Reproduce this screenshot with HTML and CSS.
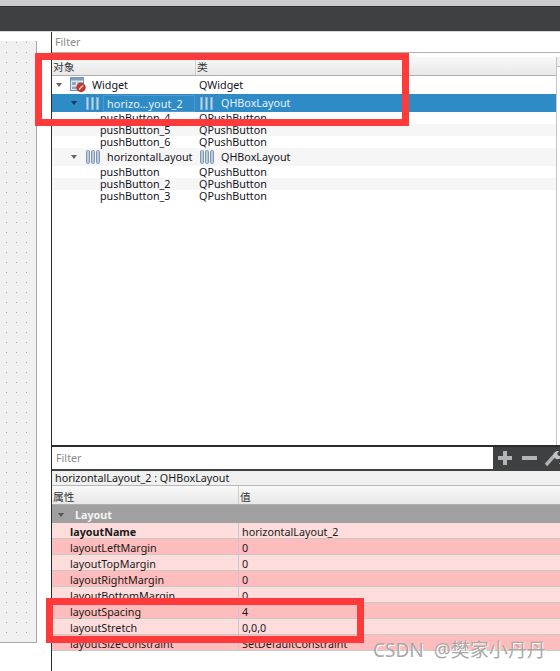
FILE: index.html
```html
<!DOCTYPE html>
<html lang="en">
<head>
  <meta charset="UTF-8">
  <title>Qt Designer</title>
  <link rel="stylesheet" href="styles.css">
</head>
<body>
  <svg width="0" height="0" class="defs">
    <symbol id="hbox" viewBox="0 0 14 14">
      <rect x="0.5" y="0.5" width="3" height="13" rx="1.2" fill="#b9cbe0" stroke="#7f97b5"/>
      <rect x="5.5" y="0.5" width="3" height="13" rx="1.2" fill="#b9cbe0" stroke="#7f97b5"/>
      <rect x="10.5" y="0.5" width="3" height="13" rx="1.2" fill="#b9cbe0" stroke="#7f97b5"/>
    </symbol>
    <symbol id="hbox-sel" viewBox="0 0 13 13">
      <rect x="0.5" y="0.5" width="2" height="12" fill="#bcd6e8" stroke="#7fb2d6"/>
      <rect x="5.5" y="0.5" width="2" height="12" fill="#bcd6e8" stroke="#7fb2d6"/>
      <rect x="10.500" y="0.5" width="2" height="12" fill="#bcd6e8" stroke="#7fb2d6"/>
    </symbol>
  </svg>

  <div class="topbar"></div>
  <div class="toolbar"></div>

  <div class="main">
    <div class="form-area">
      <div class="form-canvas"></div>
    </div>

    <div class="docks">
      <!-- Object inspector -->
      <div class="inspector">
        <div class="filter-top"><span class="filter-text">Filter</span></div>
        <div class="header-row tree-head tree-cols">
          <span class="head-cell">对象</span>
          <span class="head-cell">类</span>
        </div>
        <div class="tree">
          <div class="node node-tall tree-cols">
            <span class="name-cell">
              <span class="arrow arrow-root"></span>
              <svg class="form-icon" width="18" height="18" viewBox="0 0 18 18">
                <rect x="0.5" y="1.5" width="13" height="13" fill="#dfe6ee" stroke="#7890ab"/>
                <rect x="0.5" y="1.5" width="13" height="3" fill="#7f9dbd"/>
                <rect x="2" y="6" width="4" height="3" fill="#8fa9c4"/>
                <rect x="7.5" y="6" width="5" height="3" fill="#8fa9c4"/>
                <rect x="2" y="10.5" width="10" height="2.5" fill="#8fa9c4"/>
                <circle cx="11" cy="11.5" r="4.7" fill="#c0392f"/>
                <path d="M9 13.500l4-4" stroke="#f3d5d0" stroke-width="1.4"/>
              </svg>
              <span class="label-widget">Widget</span>
            </span>
            <span class="class-cell">QWidget</span>
          </div>

          <div class="node node-tall selected tree-cols">
            <span class="name-cell">
              <span class="arrow arrow-child arrow-sel"></span>
              <svg class="box-icon" width="13" height="13"><use href="#hbox-sel"/></svg>
              <span class="name-edit">horizo…yout_2</span>
            </span>
            <span class="class-cell class-icon">
              <svg class="box-icon" width="13" height="13"><use href="#hbox-sel"/></svg>
              QHBoxLayout
            </span>
          </div>

          <div class="node tree-cols">
            <span class="name-cell leaf">pushButton_4</span>
            <span class="class-cell">QPushButton</span>
          </div>
          <div class="node alt tree-cols">
            <span class="name-cell leaf">pushButton_5</span>
            <span class="class-cell">QPushButton</span>
          </div>
          <div class="node tree-cols">
            <span class="name-cell leaf">pushButton_6</span>
            <span class="class-cell">QPushButton</span>
          </div>

          <div class="node node-tall alt tree-cols">
            <span class="name-cell">
              <span class="arrow arrow-child"></span>
              <svg class="box-icon" width="14" height="14"><use href="#hbox"/></svg>
              <span class="label-layout">horizontalLayout</span>
            </span>
            <span class="class-cell class-icon">
              <svg class="box-icon wide" width="14" height="14"><use href="#hbox"/></svg>
              QHBoxLayout
            </span>
          </div>

          <div class="node tree-cols">
            <span class="name-cell leaf">pushButton</span>
            <span class="class-cell">QPushButton</span>
          </div>
          <div class="node alt tree-cols">
            <span class="name-cell leaf">pushButton_2</span>
            <span class="class-cell">QPushButton</span>
          </div>
          <div class="node tree-cols">
            <span class="name-cell leaf">pushButton_3</span>
            <span class="class-cell">QPushButton</span>
          </div>
        </div>
        <div class="scroll-line"><span class="scroll-arrow"></span></div>
      </div>

      <!-- Property editor -->
      <div class="props">
        <div class="filter-bar">
          <div class="filter-box">Filter</div>
          <div class="filter-tools">
            <svg width="18" height="18" viewBox="0 0 18 18"><path d="M9 2v14M2 9h14" stroke="#b4b4b4" stroke-width="4"/></svg>
            <svg width="18" height="18" viewBox="0 0 18 18"><path d="M2 9h15" stroke="#b4b4b4" stroke-width="4"/></svg>
            <svg width="20" height="18" viewBox="0 0 20 18"><path d="M2 16L10 7" stroke="#b0b0b0" stroke-width="3.4"/><path d="M9 7c0-3 2.500-5 6-5l-2 3 2 2 3-1c0 3-3 5-6 4z" fill="#c4c4c4"/><path d="M15 14h5l-2.500 3z" fill="#c4c4c4"/></svg>
          </div>
        </div>
        <div class="object-label">horizontalLayout_2 : QHBoxLayout</div>
        <div class="header-row prop-head prop-cols">
          <span class="head-cell">属性</span>
          <span class="head-cell">值</span>
        </div>
        <div class="group-row"><span class="arrow arrow-group"></span>Layout</div>
        <div class="prop light prop-cols"><span class="prop-name strong">layoutName</span><span class="prop-value">horizontalLayout_2</span></div>
        <div class="prop dark prop-cols"><span class="prop-name">layoutLeftMargin</span><span class="prop-value">0</span></div>
        <div class="prop light prop-cols"><span class="prop-name">layoutTopMargin</span><span class="prop-value">0</span></div>
        <div class="prop dark prop-cols"><span class="prop-name">layoutRightMargin</span><span class="prop-value">0</span></div>
        <div class="prop light prop-cols"><span class="prop-name">layoutBottomMargin</span><span class="prop-value">0</span></div>
        <div class="prop dark prop-cols"><span class="prop-name">layoutSpacing</span><span class="prop-value">4</span></div>
        <div class="prop light prop-cols"><span class="prop-name">layoutStretch</span><span class="prop-value">0,0,0</span></div>
        <div class="prop dark prop-cols"><span class="prop-name">layoutSizeConstraint</span><span class="prop-value">SetDefaultConstraint</span></div>
      </div>
    </div>
  </div>

  <!-- annotations drawn over the screenshot -->
  <div class="mark mark-top"></div>
  <div class="mark mark-bottom"></div>
  <div class="watermark">CSDN @樊家小丹丹</div>
</body>
</html>
```

FILE: styles.css
```css
* {
  box-sizing: border-box;
}

html, body {
  margin: 0;
  padding: 0;
  overflow: hidden;
  height: 100%;
  width: 100%;
}

body {
  position: relative;
  font-family: "Noto Sans", "Noto Sans CJK SC", sans-serif;
  font-size: 10.75px;
  color: #1a1a1a;
  background-color: #fff;
}

.defs {
  position: absolute;
}

.topbar {
  height: 6px;
  background-color: #cbcbcb;
}

.toolbar {
  height: 25px;
  background-color: #3f4042;
  border-top: 1px solid #2e2e30;
}

.main {
  display: flex;
  height: 640px;
  border-top: 1px solid #d8d8d8;
}

.form-area {
  width: 51px;
  flex: none;
  padding-top: 9px;
}

.form-canvas {
  width: 37px;
  height: 602px;
  background-color: #f0f0f0;
  background-image: radial-gradient(circle at 6.5px 1.5px, #a8a8a8 0.7px, transparent 1px);
  background-size: 10px 10px;
  border-right: 1px solid #a6a6a6;
  border-bottom: 1px solid #a6a6a6;
}

.docks {
  flex: 1;
  min-width: 0;
  display: flex;
  flex-direction: column;
  border-left: 1px solid #2c2c2c;
}

/* Object inspector */
.inspector {
  position: relative;
  height: 413px;
}

.filter-top {
  height: 21px;
  padding-left: 3px;
  display: flex;
  align-items: center;
  border-bottom: 1px solid #b0b0b0;
  color: #8a8a8a;
}

.header-row {
  height: 19px;
  background: linear-gradient(#f9f9f9, #e8e8e8);
  border-bottom: 1px solid #b0b0b0;
  color: #333;
}

.tree-head {
  margin-top: 4px;
}

.prop-head .head-cell {
  padding-top: 2px;
}

.head-cell {
  display: flex;
  align-items: center;
  padding-left: 1px;
  border-right: 1px solid #d0d0d0;
  font-family: "Noto Sans CJK SC", sans-serif;
}

.head-cell:last-child {
  border-right: none;
}

.tree-cols {
  display: grid;
  grid-template-columns: 144px 1fr;
  margin-right: 4px;
}

.node {
  height: 12px;
  line-height: 12px;
  background-color: #fff;
  color: #14141c;
}

.node-tall {
  height: 18px;
  line-height: 18px;
}

.alt {
  background-color: #f6f6f6;
}

.selected {
  background-color: #2e8bc6;
  color: #e8f2f8;
}

.name-cell {
  display: flex;
  align-items: center;
  white-space: nowrap;
}

.leaf {
  padding-left: 48px;
}

.class-cell {
  display: flex;
  align-items: center;
  padding-left: 3px;
  white-space: nowrap;
}

.class-icon .box-icon {
  margin: 0 8px 0 1px;
  flex: none;
}

.class-icon .wide {
  margin-right: 7px;
}

.arrow {
  display: inline-block;
  width: 0;
  height: 0;
  flex: none;
  border-left: 3px solid transparent;
  border-right: 3px solid transparent;
  border-top: 4px solid #666;
}

.arrow-root {
  margin-left: 4px;
}

.arrow-child {
  margin-left: 19px;
}

.arrow-sel {
  border-top-color: #123a55;
}

.arrow-group {
  margin: 0 11px 0 6px;
  border-top-color: #555;
}

.form-icon {
  margin-left: 8px;
  flex: none;
}

.label-widget {
  margin-left: 4px;
}

.arrow-child + .box-icon {
  margin-left: 9px;
  flex: none;
}

.label-layout {
  margin-left: 7px;
}

.name-edit {
  margin-left: 4px;
  padding: 0 0 0 3px;
  width: 92px;
  height: 17px;
  line-height: 16px;
  letter-spacing: 0.15px;
  border: 1px solid #4c9ad0;
  flex: none;
}

.scroll-line {
  position: absolute;
  right: 0;
  top: 25px;
  bottom: 0;
  width: 4px;
  border-left: 1px solid #c4c4c4;
}

.scroll-arrow {
  display: block;
  height: 10px;
  border-bottom: 1px solid #c4c4c4;
  background-color: #f0f0f0;
}

/* Property editor */
.props {
  flex: 1;
  border-top: 2px solid #2c2c2c;
}

.filter-bar {
  display: flex;
  height: 24px;
  border-bottom: 2px solid #3f4042;
}

.filter-box {
  flex: 1;
  padding-left: 4px;
  line-height: 23px;
  color: #8a8a8a;
  background-color: #fff;
}

.filter-tools {
  width: 67px;
  display: flex;
  align-items: center;
  gap: 6px;
  padding-left: 3px;
  background-color: #3f4042;
  flex: none;
}

.filter-tools svg {
  flex: none;
}

.object-label {
  height: 15px;
  line-height: 14px;
  padding-left: 3px;
  background-color: #f0f0f0;
  border-bottom: 1px solid #b8b8b8;
}

.prop-cols {
  display: grid;
  grid-template-columns: 187px 1fr;
}

.group-row {
  height: 18px;
  padding-top: 2px;
  display: flex;
  align-items: center;
  background-color: #a0a0a0;
  color: #f4f4f4;
  font-weight: bold;
}

.prop {
  height: 16px;
  line-height: 18px;
  border-bottom: 1px solid #c8c8c8;
}

.light {
  background-color: #fddcdc;
}

.dark {
  background-color: #febcbc;
}

.prop-name {
  padding-left: 18px;
  border-right: 1px solid #c8c8c8;
  height: 15px;
}

.strong {
  font-weight: bold;
}

.prop-value {
  padding-left: 3px;
  height: 15px;
}

/* Annotations */
.mark {
  position: absolute;
  border: 7px solid #ff3a3a;
}

.mark-top {
  left: 35px;
  top: 53px;
  width: 374px;
  height: 73px;
}

.mark-bottom {
  left: 46px;
  top: 598px;
  width: 318px;
  height: 45px;
}

.watermark {
  position: absolute;
  left: 373px;
  top: 638px;
  font-size: 19px;
  line-height: 24px;
  word-spacing: 5px;
  white-space: nowrap;
  color: #a8a8a8;
  text-shadow: 1px 1px 0 #fff;
}
```
